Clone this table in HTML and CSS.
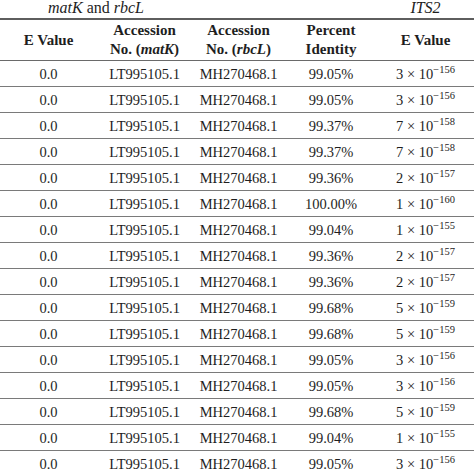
FILE: index.html
```html
<!DOCTYPE html>
<html>
<head>
<meta charset="utf-8">
<link rel="stylesheet" href="styles.css">
</head>
<body>
<table class="blast">
  <colgroup>
    <col class="c1"><col class="c2"><col class="c3"><col class="c4"><col class="c5">
  </colgroup>
  <thead>
    <tr class="title-row">
      <th colspan="2" class="title"><i>matK</i> and <i>rbcL</i></th>
      <th colspan="2"></th>
      <th class="title"><i>ITS2</i></th>
    </tr>
    <tr class="head-row">
      <th>E Value</th>
      <th>Accession<br>No. (<i>matK</i>)</th>
      <th>Accession<br>No. (<i>rbcL</i>)</th>
      <th>Percent<br>Identity</th>
      <th>E Value</th>
    </tr>
  </thead>
  <tbody>
    <tr><td>0.0</td><td>LT995105.1</td><td>MH270468.1</td><td>99.05%</td><td>3 × 10<span class="exp">−156</span></td></tr>
    <tr><td>0.0</td><td>LT995105.1</td><td>MH270468.1</td><td>99.05%</td><td>3 × 10<span class="exp">−156</span></td></tr>
    <tr><td>0.0</td><td>LT995105.1</td><td>MH270468.1</td><td>99.37%</td><td>7 × 10<span class="exp">−158</span></td></tr>
    <tr><td>0.0</td><td>LT995105.1</td><td>MH270468.1</td><td>99.37%</td><td>7 × 10<span class="exp">−158</span></td></tr>
    <tr><td>0.0</td><td>LT995105.1</td><td>MH270468.1</td><td>99.36%</td><td>2 × 10<span class="exp">−157</span></td></tr>
    <tr><td>0.0</td><td>LT995105.1</td><td>MH270468.1</td><td>100.00%</td><td>1 × 10<span class="exp">−160</span></td></tr>
    <tr><td>0.0</td><td>LT995105.1</td><td>MH270468.1</td><td>99.04%</td><td>1 × 10<span class="exp">−155</span></td></tr>
    <tr><td>0.0</td><td>LT995105.1</td><td>MH270468.1</td><td>99.36%</td><td>2 × 10<span class="exp">−157</span></td></tr>
    <tr><td>0.0</td><td>LT995105.1</td><td>MH270468.1</td><td>99.36%</td><td>2 × 10<span class="exp">−157</span></td></tr>
    <tr><td>0.0</td><td>LT995105.1</td><td>MH270468.1</td><td>99.68%</td><td>5 × 10<span class="exp">−159</span></td></tr>
    <tr><td>0.0</td><td>LT995105.1</td><td>MH270468.1</td><td>99.68%</td><td>5 × 10<span class="exp">−159</span></td></tr>
    <tr><td>0.0</td><td>LT995105.1</td><td>MH270468.1</td><td>99.05%</td><td>3 × 10<span class="exp">−156</span></td></tr>
    <tr><td>0.0</td><td>LT995105.1</td><td>MH270468.1</td><td>99.05%</td><td>3 × 10<span class="exp">−156</span></td></tr>
    <tr><td>0.0</td><td>LT995105.1</td><td>MH270468.1</td><td>99.68%</td><td>5 × 10<span class="exp">−159</span></td></tr>
    <tr><td>0.0</td><td>LT995105.1</td><td>MH270468.1</td><td>99.04%</td><td>1 × 10<span class="exp">−155</span></td></tr>
    <tr><td>0.0</td><td>LT995105.1</td><td>MH270468.1</td><td>99.05%</td><td>3 × 10<span class="exp">−156</span></td></tr>
  </tbody>
</table>
</body>
</html>
```

FILE: styles.css
```css
html, body {
  margin: 0;
  padding: 0;
  background: #ffffff;
  overflow: hidden;
}

.blast {
  width: 474px;
  border-collapse: collapse;
  table-layout: fixed;
  font-family: "Liberation Serif", "Times New Roman", serif;
  font-size: 14.5px;
  color: #1e1e1e;
}

.c1 { width: 97px; }
.c2 { width: 95px; }
.c3 { width: 93px; }
.c4 { width: 92px; }
.c5 { width: 97px; }

.title-row th {
  height: 15px;
  padding: 0 0 3px;
  line-height: 15px;
  vertical-align: bottom;
  font-weight: normal;
  font-size: 16px;
  border-bottom: 2px solid #5e5e5e;
}

.head-row th {
  font-weight: bold;
  font-size: 15px;
  line-height: 19px;
  padding: 1px 0 1px;
  text-align: center;
  vertical-align: middle;
  border-bottom: 1px solid #6a6a6a;
}

.head-row th i {
  font-weight: bold;
}

tbody td {
  height: 25px;
  padding: 0;
  text-align: center;
  vertical-align: middle;
  line-height: 16px;
  border-bottom: 1px solid #7a7a7a;
  white-space: nowrap;
}

.exp {
  font-size: 10.5px;
  line-height: 0;
  vertical-align: 6px;
}
```
